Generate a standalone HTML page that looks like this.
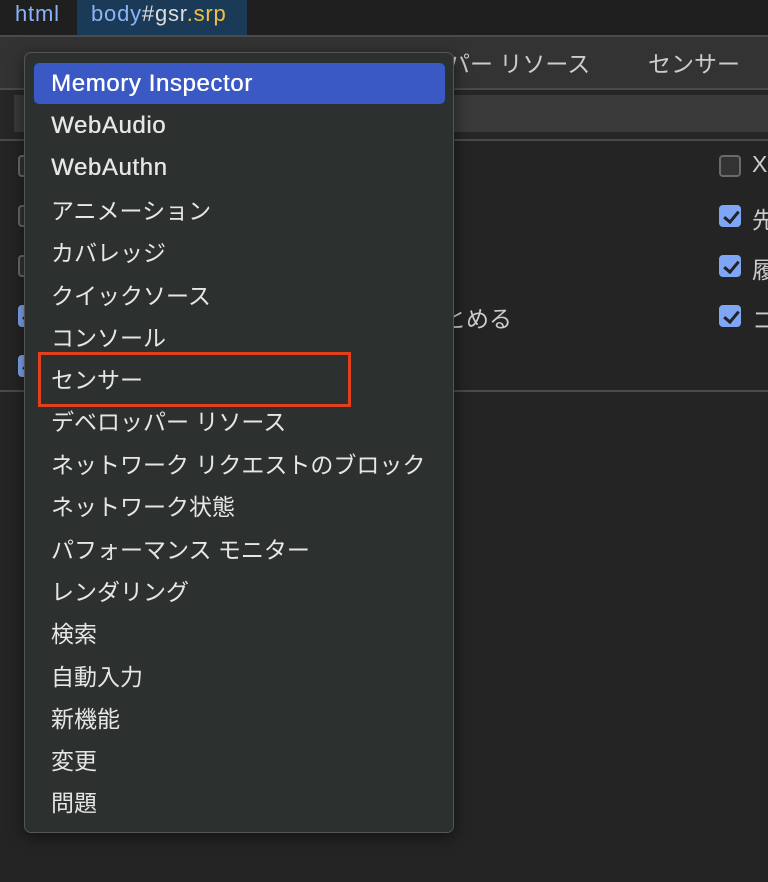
<!DOCTYPE html>
<html><head><meta charset="utf-8"><style>
*{margin:0;padding:0;box-sizing:border-box}
body{width:768px;height:882px;background:#242424;position:relative;overflow:hidden;font-family:"Liberation Sans","Noto Sans CJK JP",sans-serif;color:#ddd}
.a{position:absolute}
.cb{position:absolute;width:22px;height:22px;border-radius:4px;border:2px solid #6a6a6a;background:#333}
.cb.on{background:#7fa6f4;border-color:#7fa6f4}
.cb.on::after{content:"";position:absolute;left:6px;top:1px;width:6px;height:12px;border:solid #222;border-width:0 3px 3px 0;transform:rotate(40deg)}
.menu{position:absolute;left:24px;top:52px;width:430px;height:781px;background:#2c302e;border:1px solid #555;border-radius:7px;box-shadow:0 4px 16px rgba(0,0,0,.5)}
.it{position:absolute;left:26px;font-size:23px;color:#e6e6e6;line-height:42px;height:42px;white-space:nowrap}
.lt{font-size:24px;letter-spacing:.6px;text-shadow:0.4px 0 0 currentColor}
</style></head><body>
<div class="a" style="left:0;top:0;width:768px;height:36px;background:#1f1f1f"></div>
<div class="a" style="left:77px;top:0;width:170px;height:35px;background:#1b3a58"></div>
<div class="a" style="left:15px;top:1px;font-size:22px;color:#8ab4f8;letter-spacing:.8px">html</div>
<div class="a" style="left:91px;top:1px;font-size:22px;color:#8ab4f8;letter-spacing:.8px">body<span style="color:#ddd">#gsr</span><span style="color:#f0c040">.srp</span></div>
<div class="a" style="left:0;top:35px;width:768px;height:2px;background:#4a4a4a"></div>
<div class="a" style="left:0;top:37px;width:768px;height:51px;background:#333"></div>
<div class="a" style="left:0;top:88px;width:768px;height:2px;background:#4a4a4a"></div>
<div class="a" style="left:424px;top:45px;font-size:23px;color:#ccc">ッパー リソース</div>
<div class="a" style="left:648px;top:45px;font-size:23px;color:#ccc">センサー</div>
<div class="a" style="left:0;top:90px;width:768px;height:49px;background:#262626"></div>
<div class="a" style="left:14px;top:95px;width:754px;height:37px;background:#3a3a3a"></div>
<div class="a" style="left:0;top:139px;width:768px;height:2px;background:#4a4a4a"></div>
<div class="a" style="left:0;top:390px;width:768px;height:2px;background:#4a4a4a"></div>
<div class="cb" style="left:18px;top:155px"></div>
<div class="cb" style="left:18px;top:205px"></div>
<div class="cb" style="left:18px;top:255px"></div>
<div class="cb on" style="left:18px;top:305px"></div>
<div class="cb on" style="left:18px;top:355px"></div>
<div class="a" style="left:443px;top:300px;font-size:23px;color:#ccc">とめる</div>
<div class="cb" style="left:719px;top:155px"></div>
<div class="cb on" style="left:719px;top:205px"></div>
<div class="cb on" style="left:719px;top:255px"></div>
<div class="cb on" style="left:719px;top:305px"></div>
<div class="a" style="left:752px;top:151px;font-size:23px;color:#ccc">X</div>
<div class="a" style="left:752px;top:201px;font-size:23px;color:#ccc">先</div>
<div class="a" style="left:752px;top:251px;font-size:23px;color:#ccc">履</div>
<div class="a" style="left:752px;top:301px;font-size:23px;color:#ccc">コ</div>
<div class="menu">
<div class="a" style="left:9px;top:10px;width:411px;height:41px;background:#3a59c4;border-radius:5px"></div>
<div class="it lt" style="top:10px;color:#fff">Memory Inspector</div>
<div class="it lt" style="top:52px">WebAudio</div>
<div class="it lt" style="top:94px">WebAuthn</div>
<div class="it" style="top:137px">アニメーション</div>
<div class="it" style="top:179px">カバレッジ</div>
<div class="it" style="top:222px">クイックソース</div>
<div class="it" style="top:264px">コンソール</div>
<div class="it" style="top:306px">センサー</div>
<div class="it" style="top:348px">デベロッパー リソース</div>
<div class="it" style="top:391px">ネットワーク リクエストのブロック</div>
<div class="it" style="top:433px">ネットワーク状態</div>
<div class="it" style="top:476px">パフォーマンス モニター</div>
<div class="it" style="top:518px">レンダリング</div>
<div class="it" style="top:560px">検索</div>
<div class="it" style="top:603px">自動入力</div>
<div class="it" style="top:645px">新機能</div>
<div class="it" style="top:687px">変更</div>
<div class="it" style="top:729px">問題</div>
</div>
<div class="a" style="left:38px;top:352px;width:313px;height:55px;border:3px solid #e2401c"></div>
</body></html>
